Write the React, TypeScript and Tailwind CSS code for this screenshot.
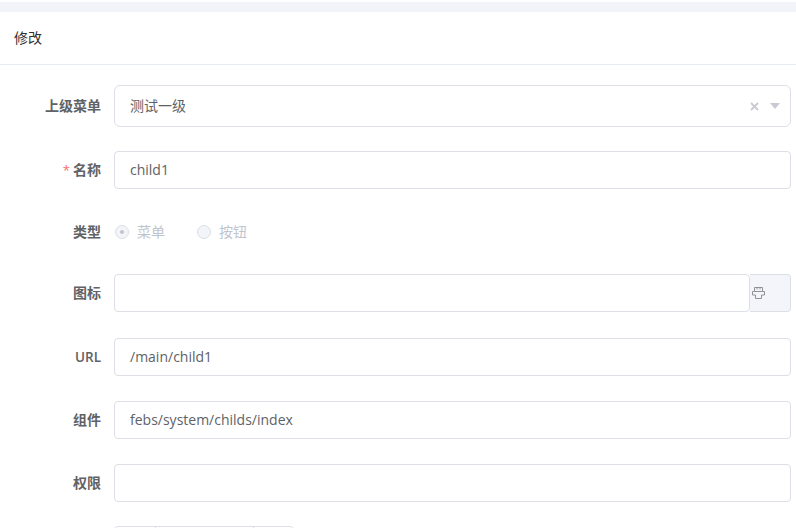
const font = { fontFamily: '"Open Sans", "Noto Sans CJK SC", sans-serif' };

function Label({ text, required, small }: { text: string; required?: boolean; small?: boolean }) {
  return (
    <label className={`w-[102px] shrink-0 pr-px text-right font-semibold text-[#606266] ${small ? 'text-[13.5px]' : 'text-sm'}`}>
      {required && <span className="mr-[3px] text-[13px] font-normal text-[#f56c6c]">*</span>}
      {text}
    </label>
  );
}

function TextRow({ label, value, required, small, mb }: { label: string; value?: string; required?: boolean; small?: boolean; mb: string }) {
  return (
    <div className={`flex items-center ${mb}`}>
      <Label text={label} required={required} small={small} />
      <div className="ml-3 flex h-[38px] w-[677px] items-center rounded border border-[#dcdfe6] bg-white pl-[15px] text-sm text-[#606266]">
        {value}
      </div>
    </div>
  );
}

function Radio({ text, checked }: { text: string; checked?: boolean }) {
  return (
    <div className="flex items-center gap-2 text-sm text-[#c0c4cc]">
      <span className="flex h-[14px] w-[14px] items-center justify-center rounded-full border border-[#dcdfe6] bg-[#f2f4f9]">
        {checked && <span className="h-1 w-1 rounded-full bg-[#c0c4cc]" />}
      </span>
      {text}
    </div>
  );
}

export default function App() {
  return (
    <div className="h-[528px] w-[796px] overflow-hidden bg-white" style={font}>
      <div className="mt-[2px] h-[10px] bg-[#f3f4f9]" />
      <div className="flex h-[53px] items-center border-b border-[#e6ebf5] pl-[14px] text-sm text-[#303133]">修改</div>

      <div className="pt-5">
        <div className="mb-6 flex items-center">
          <Label text="上级菜单" />
          <div className="ml-3 flex h-[42px] w-[677px] items-center justify-between rounded-md border border-[#dcdfe6] bg-white pl-[15px] pr-[10px] text-sm text-[#606266]">
            <span>测试一级</span>
            <span className="flex items-center gap-[11px]">
              <svg width="9" height="9" viewBox="0 0 9 9" fill="none" stroke="#c8cbd2" strokeWidth="1.8">
                <path d="M1 1l7 7M8 1L1 8" />
              </svg>
              <svg width="10" height="6" viewBox="0 0 10 6" fill="#c8cbd2">
                <path d="M0 0h10L5 6z" />
              </svg>
            </span>
          </div>
        </div>

        <TextRow label="名称" value="child1" required mb="mb-6" />

        <div className="mb-[23px] flex h-[38px] items-center">
          <Label text="类型" />
          <div className="ml-[13px] flex items-center gap-8">
            <Radio text="菜单" checked />
            <Radio text="按钮" />
          </div>
        </div>

        <div className="mb-[26px] flex items-center">
          <Label text="图标" />
          <div className="ml-3 flex h-[38px] w-[677px]">
            <div className="w-[636px] rounded border border-[#dcdfe6] bg-white" />
            <div className="flex w-[41px] items-center rounded-r border border-l-0 border-[#dcdfe6] bg-[#f4f5fa] pl-[2px]">
              <svg width="13" height="12" viewBox="0 0 13 12" fill="none" stroke="#8f9299" strokeWidth="1">
                <path d="M2.500.5h8v4h2v3.500h-3v3.500h-6V8H.5V4.500h2zM2.500 4.500h8M5 .5v2M8 .5v2" />
              </svg>
            </div>
          </div>
        </div>

        <TextRow label="URL" value="/main/child1" small mb="mb-[25px]" />
        <TextRow label="组件" value="febs/system/childs/index" mb="mb-[25px]" />
        <TextRow label="权限" mb="mb-6" />

        <div className="ml-[114px] flex h-[38px] w-[180px] rounded border border-[#dcdfe6]">
          <div className="w-[41px] border-r border-[#dcdfe6]" />
          <div className="w-[98px] border-r border-[#dcdfe6]" />
        </div>
      </div>
    </div>
  );
}
